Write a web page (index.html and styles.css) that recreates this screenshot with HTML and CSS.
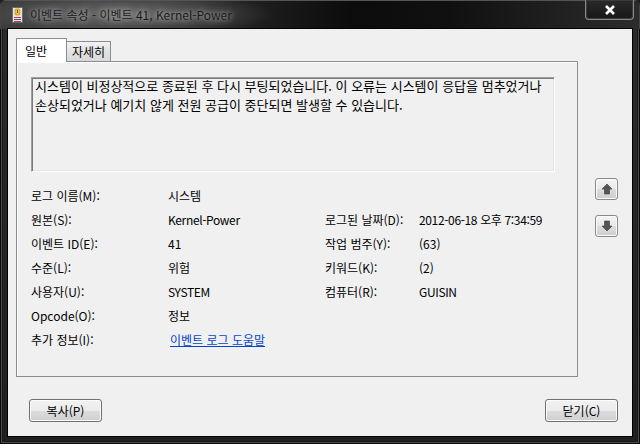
FILE: index.html
```html
<!DOCTYPE html>
<html lang="ko">
<head>
<meta charset="utf-8">
<title>이벤트 속성</title>
<link rel="stylesheet" href="styles.css">
</head>
<body>
<div class="window">
  <div class="titlebar">
    <svg class="app-icon" width="11" height="16" viewBox="0 0 11 16">
      <rect x="0.5" y="0.5" width="10" height="15" fill="#e6e8f0" stroke="#6a6a6a"/>
      <rect x="3" y="2" width="5" height="6" rx="1" fill="#f2c22a" stroke="#b07a10" stroke-width="0.6"/>
      <rect x="5" y="3" width="1" height="3" fill="#8a4a00"/>
      <rect x="2" y="10" width="7" height="1" fill="#d03030"/>
      <rect x="2" y="12" width="7" height="1" fill="#3050c0"/>
      <rect x="2" y="14" width="7" height="1" fill="#d03030"/>
    </svg>
    <span class="title">이벤트 속성 - 이벤트 41, Kernel-Power</span>
    <div class="close">
      <svg width="12" height="10" viewBox="0 0 12 10"><path d="M2 1 L10 9 M10 1 L2 9" stroke="#fff" stroke-width="2.6" fill="none"/></svg>
    </div>
  </div>
  <div class="client">
    <div class="main">
      <div class="tabbox">
        <div class="tabs">
          <div class="tab active">일반</div>
          <div class="tab">자세히</div>
        </div>
        <div class="panel">
          <div class="desc"><p>시스템이 비정상적으로 종료된 후 다시 부팅되었습니다. 이 오류는 시스템이 응답을 멈추었거나 손상되었거나 예기치 않게 전원 공급이 중단되면 발생할 수 있습니다.</p></div>
          <div class="fields">
            <span>로그 이름(M):</span><span>시스템</span><span></span><span></span>
            <span>원본(S):</span><span class="latin">Kernel-Power</span><span>로그된 날짜(D):</span><span class="latin">2012-06-18 오후 7:34:59</span>
            <span>이벤트 ID(E):</span><span>41</span><span>작업 범주(Y):</span><span>(63)</span>
            <span>수준(L):</span><span>위험</span><span>키워드(K):</span><span>(2)</span>
            <span>사용자(U):</span><span class="latin">SYSTEM</span><span>컴퓨터(R):</span><span class="latin">GUISIN</span>
            <span>Opcode(O):</span><span>정보</span><span></span><span></span>
            <span>추가 정보(I):</span><span><a class="link" href="#">이벤트 로그 도움말</a></span><span></span><span></span>
          </div>
        </div>
      </div>
      <div class="nav">
        <div class="navbtn">
          <svg width="12" height="12" viewBox="0 0 12 12"><path d="M6 1 L11 6 H8.5 V11 H3.5 V6 H1 Z" fill="#555" stroke="#3a3a3a" stroke-width="0.6"/></svg>
        </div>
        <div class="navbtn">
          <svg width="12" height="12" viewBox="0 0 12 12"><path d="M6 11 L11 6 H8.5 V1 H3.5 V6 H1 Z" fill="#555" stroke="#3a3a3a" stroke-width="0.6"/></svg>
        </div>
      </div>
    </div>
    <div class="actions">
      <div class="btn">복사(P)</div>
      <div class="btn">닫기(C)</div>
    </div>
  </div>
</div>
</body>
</html>
```
FILE: styles.css
```css
html, body {
  margin: 0;
  padding: 0;
  background: #1e1e1e;
}

body {
  font-family: "Noto Sans CJK KR", "Malgun Gothic", sans-serif;
  font-size: 12px;
  color: #000;
}

.window {
  width: 640px;
  height: 444px;
  box-sizing: border-box;
  display: flex;
  flex-direction: column;
  background: linear-gradient(to bottom, #2c2c2c, #1f1f1f);
  box-shadow: inset 0 0 0 1px #0a0a0a, inset 0 0 0 2px #4a4a4a, inset 0 0 0 3px #1a1a1a;
  border-radius: 6px 6px 0 0;
  overflow: hidden;
}

.titlebar {
  height: 29px;
  flex: none;
  display: flex;
  align-items: flex-start;
  padding-left: 12px;
  background:
    radial-gradient(ellipse 150px 24px at 125px 14px, rgba(150,150,150,0.6), rgba(150,150,150,0) 100%),
    linear-gradient(to right, #3a3a3a 0%, #2a2a2a 30%, #0c0c0c 55%, #101010 70%, #2c2c2c 100%);
  box-shadow: inset 0 1px 0 #555, inset 1px 0 0 #444, inset -1px 0 0 #444;
}

.app-icon {
  margin-top: 7px;
  flex: none;
}

.title {
  margin-left: 7px;
  line-height: 29px;
  font-size: 12px;
  color: #1c1c1c;
  text-shadow: 0 0 5px rgba(210,210,210,0.75), 0 0 9px rgba(200,200,200,0.55);
  white-space: nowrap;
}

.close {
  margin-left: auto;
  margin-right: 6px;
  width: 49px;
  height: 20px;
  box-sizing: border-box;
  border: 1px solid #8a8a8a;
  border-top: 0;
  border-radius: 0 0 4px 4px;
  background: linear-gradient(to bottom, #2a2a2a, #181818);
  box-shadow: inset 0 0 0 1px #3c3c3c;
  display: flex;
  align-items: center;
  justify-content: center;
}

.client {
  flex: 1;
  margin: 0 8px 8px 8px;
  background: #f0f0f0;
  box-shadow: 0 0 0 1px #000;
  display: flex;
  flex-direction: column;
  padding: 9px 14px 14px 8px;
}

.main {
  display: flex;
  align-items: flex-start;
  gap: 17px;
}

.tabbox {
  width: 563px;
  display: flex;
  flex-direction: column;
}

.tabs {
  height: 23px;
  display: flex;
  align-items: flex-end;
}

.tab {
  box-sizing: border-box;
  height: 20px;
  width: 44px;
  border: 1px solid #898c95;
  border-left: 0;
  border-bottom: 0;
  background: linear-gradient(to bottom, #f2f2f2, #e3e3e3 50%, #d9d9d9);
  text-align: center;
  line-height: 20px;
}

.tab.active {
  position: relative;
  z-index: 1;
  width: 51px;
  height: 24px;
  margin-bottom: -1px;
  border-left: 1px solid #898c95;
  background: #ffffff;
  line-height: 23px;
  text-align: left;
  padding-left: 8px;
}

.panel {
  box-sizing: border-box;
  height: 316px;
  border: 1px solid #898c95;
  background: #f0f0f0;
  box-shadow: inset 1px 1px 0 #ffffff;
  padding: 15px 0 0 14px;
}

.desc {
  box-sizing: border-box;
  width: 524px;
  height: 95px;
  border-top: 1px solid #a0a0a0;
  border-left: 1px solid #a0a0a0;
  border-right: 1px solid #ffffff;
  border-bottom: 1px solid #ffffff;
  box-shadow: inset 1px 1px 0 #7a7a7a, inset -1px -1px 0 #e3e3e3;
  background: #f0f0f0;
  padding: 0 8px 0 3px;
  overflow: hidden;
}

.desc p {
  margin: -2px 0 0 0;
  font-size: 13px;
  line-height: 19px;
  word-break: keep-all;
}

.fields {
  margin-top: 12px;
  display: grid;
  grid-template-columns: 137px 157px 94px auto;
  grid-auto-rows: 24px;
  line-height: 24px;
  white-space: nowrap;
}

.latin {
  letter-spacing: -0.35px;
}

.link {
  color: #0645c8;
  text-decoration: underline;
  margin-left: 2px;
}

.nav {
  margin-top: 140px;
  display: flex;
  flex-direction: column;
  gap: 15px;
}

.navbtn {
  box-sizing: border-box;
  width: 23px;
  height: 22px;
  border: 1px solid #8a8a8a;
  border-radius: 3px;
  background: linear-gradient(to bottom, #f4f4f4, #e8e8e8 50%, #dcdcdc 51%, #cfcfcf);
  box-shadow: inset 0 0 0 1px #fbfbfb;
  display: flex;
  align-items: center;
  justify-content: center;
}

.actions {
  margin-top: auto;
  padding-left: 13px;
  display: flex;
  justify-content: space-between;
}

.btn {
  box-sizing: border-box;
  width: 73px;
  height: 23px;
  border: 1px solid #707070;
  border-radius: 3px;
  background: linear-gradient(to bottom, #f2f2f2, #ebebeb 50%, #dddddd 51%, #cfcfcf);
  box-shadow: inset 0 0 0 1px #fcfcfc;
  text-align: center;
  line-height: 21px;
  color: #000;
}
```
